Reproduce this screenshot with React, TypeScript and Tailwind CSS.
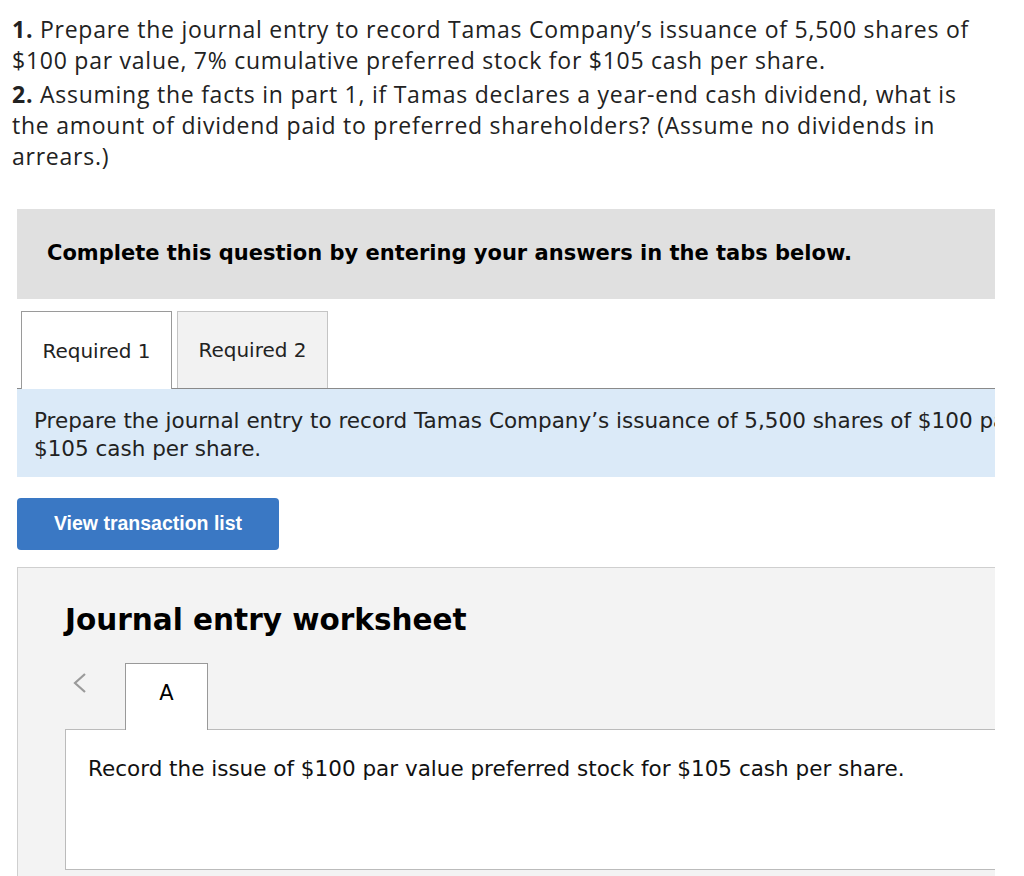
export default function App() {
  return (
    <div className="w-[1024px] min-h-[876px] bg-white overflow-hidden">
      <div className="pl-3 pt-[14px] text-[23px] leading-[31px] tracking-[0.75px] text-[#222] font-['Open_Sans',sans-serif] whitespace-nowrap">
        <p>
          <span className="font-bold">1.</span> Prepare the journal entry to record Tamas Company’s issuance of 5,500 shares of
          <br />
          $100 par value, 7% cumulative preferred stock for $105 cash per share.
        </p>
        <p className="mt-[3px]">
          <span className="font-bold">2.</span> Assuming the facts in part 1, if Tamas declares a year-end cash dividend, what is
          <br />
          the amount of dividend paid to preferred shareholders? (Assume no dividends in
          <br />
          arrears.)
        </p>
      </div>

      <div className="ml-[17px] w-[978px] overflow-hidden mt-[37px] font-['DejaVu_Sans',Verdana,sans-serif] text-black">
        <div className="h-[90px] bg-[#e0e0e0] flex items-center pl-[30px]">
          <h2 className="text-[21px] font-bold">Complete this question by entering your answers in the tabs below.</h2>
        </div>

        <div className="mt-3 flex items-end gap-[5px] pl-1 border-b border-[#8a8a8a]">
          <div className="w-[151px] h-[78px] -mb-px bg-white border border-b-0 border-[#9a9a9a] flex items-center justify-center text-[20px] text-[#222]">
            Required 1
          </div>
          <div className="w-[151px] h-[77px] bg-[#f2f2f2] border border-b-0 border-[#c4c4c4] flex items-center justify-center text-[20px] text-[#222]">
            Required 2
          </div>
        </div>

        <div className="h-[88px] bg-[#dbeaf8] pl-[17px] pt-[18px] text-[21.5px] leading-[28px] text-[#222] whitespace-nowrap">
          Prepare the journal entry to record Tamas Company’s issuance of 5,500 shares of $100 par value, 7% cumulative preferred stock for
          <br />
          $105 cash per share.
        </div>

        <button className="mt-[21px] w-[262px] h-[52px] rounded-[4px] bg-[#3a78c4] text-white font-bold text-[19.5px] font-['Liberation_Sans',Arial,sans-serif]">
          View transaction list
        </button>

        <div className="mt-[17px] h-[320px] bg-[#f3f3f3] border-t border-l border-[#cfcfcf] pl-[47px] pt-[30px]">
          <h3 className="text-[29.5px] font-bold leading-[44px] text-black">Journal entry worksheet</h3>
          <div className="mt-[21px] flex items-end">
            <div className="w-[60px] h-[66px] flex items-start pt-[9px] pl-[6px]">
              <svg width="16" height="22" viewBox="0 0 16 22" fill="none" stroke="#9a9a9a" strokeWidth="2.2">
                <path d="M14 2 L4 11 L14 20" />
              </svg>
            </div>
            <div className="relative z-10 -mb-px w-[83px] h-[67px] bg-white border border-b-0 border-[#999] flex justify-center pt-[14px] text-[21px] text-black">
              A
            </div>
          </div>
          <div className="h-[141px] bg-white border border-r-0 border-[#bbb] pl-[22px] pt-[23px] text-[21.5px] text-[#111] whitespace-nowrap">
            Record the issue of $100 par value preferred stock for $105 cash per share.
          </div>
        </div>
      </div>
    </div>
  );
}
